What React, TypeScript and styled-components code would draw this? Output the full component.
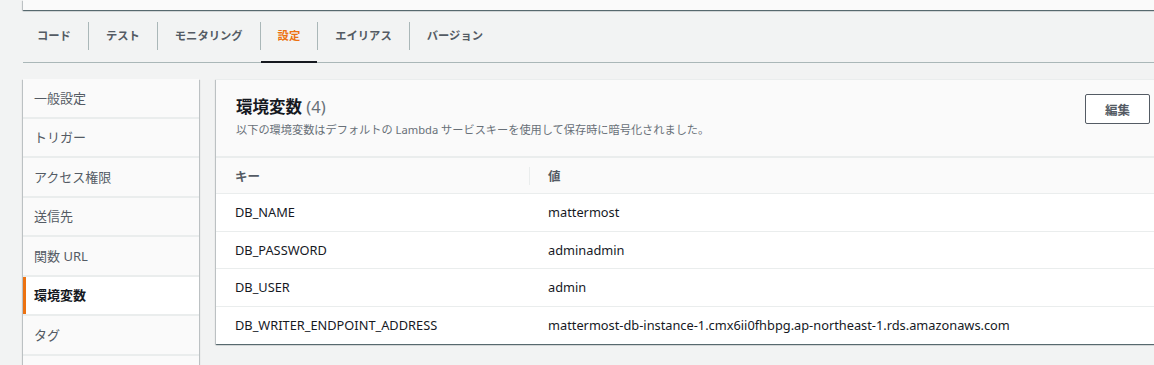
import React from "react";
import styled, { createGlobalStyle } from "styled-components";

const GlobalStyle = createGlobalStyle`
  html, body {
    margin: 0;
    padding: 0;
    background: #f2f3f3;
    overflow: hidden;
  }
  body {
    font-family: "Noto Sans", "Noto Sans CJK JP", sans-serif;
    color: #16191f;
  }
  * { box-sizing: border-box; }
`;

const cardShadow =
  "0 1px 1px 0 rgba(0,28,36,0.5), 1px 1px 1px 0 rgba(0,28,36,0.15), -1px 1px 1px 0 rgba(0,28,36,0.15)";

const Page = styled.div`
  width: calc(100% + 16px);
  padding-left: 23px;
  height: 365px;
  overflow: hidden;
`;

const TopCard = styled.div`
  height: 10px;
  background: #fafafa;
  box-shadow: ${cardShadow};
`;

const TabBar = styled.div`
  display: flex;
  margin-top: 9px;
  border-bottom: 1px solid #aab7b8;
`;

const Tab = styled.div`
  position: relative;
  padding: 3px 0 12px;
`;

const TabLabel = styled.div<{ $first?: boolean; $active?: boolean }>`
  height: 28px;
  line-height: 28px;
  padding: ${(p) => (p.$first ? "0 17px 0 14px" : "0 17px")};
  border-left: ${(p) => (p.$first ? "none" : "1px solid #aab7b8")};
  font-size: 11.3px;
  font-weight: 700;
  color: ${(p) => (p.$active ? "#ec7211" : "#545b64")};
  white-space: nowrap;
`;

const ActiveBar = styled.div`
  position: absolute;
  left: 1px;
  right: 0;
  bottom: -1px;
  height: 2px;
  background: #16191f;
`;

const Content = styled.div`
  display: flex;
  gap: 17px;
  margin-top: 16px;
  align-items: flex-start;
`;

const Nav = styled.nav`
  width: 176px;
  flex: none;
  display: flex;
  flex-direction: column;
  gap: 2px;
  background: #eaeded;
  box-shadow: ${cardShadow};
`;

const NavItem = styled.div<{ $active?: boolean }>`
  height: 37.5px;
  display: flex;
  align-items: center;
  padding-left: ${(p) => (p.$active ? "8px" : "11px")};
  padding-bottom: 1px;
  border-left: ${(p) => (p.$active ? "3px solid #ec7211" : "none")};
  background: ${(p) => (p.$active ? "#ffffff" : "#fafafa")};
  color: ${(p) => (p.$active ? "#16191f" : "#545b64")};
  font-weight: ${(p) => (p.$active ? 700 : 400)};
  font-size: 13px;
  white-space: nowrap;
`;

const Panel = styled.section`
  flex: 1;
  background: #fafafa;
  border-top: 1px solid #eaeded;
  box-shadow: ${cardShadow};
`;

const PanelHeader = styled.div`
  display: flex;
  justify-content: space-between;
  align-items: flex-start;
  padding: 16px 20px 18px 20px;
  border-bottom: 2px solid #eaeded;
`;

const TitleBlock = styled.div`
  display: flex;
  flex-direction: column;
`;

const Title = styled.h2`
  margin: 0;
  font-size: 16.5px;
  line-height: 22px;
  font-weight: 700;
  color: #16191f;
`;

const Count = styled.span`
  font-weight: 400;
  color: #687078;
`;

const Subtitle = styled.p`
  margin: 4px 0 0;
  font-size: 11.2px;
  line-height: 16px;
  color: #687078;
`;

const EditButton = styled.button`
  width: 65px;
  height: 30px;
  margin-top: -2px;
  background: #ffffff;
  border: 1px solid #545b64;
  border-radius: 2px;
  font-family: inherit;
  font-size: 12.5px;
  font-weight: 700;
  color: #545b64;
  padding: 0;
`;

const Table = styled.div`
  display: grid;
  grid-template-columns: 313px 1fr;
`;

const HeadCell = styled.div<{ $divided?: boolean }>`
  height: 36px;
  display: flex;
  align-items: center;
  padding-left: ${(p) => (p.$divided ? "0" : "19px")};
  background: #fafafa;
  border-bottom: 1px solid #eaeded;
  font-size: 12.5px;
  font-weight: 700;
  color: #545b64;
`;

const Divider = styled.span`
  width: 1px;
  height: 18px;
  background: #eaeded;
  margin-right: 18px;
`;

const Cell = styled.div<{ $last?: boolean }>`
  height: 37.5px;
  display: flex;
  align-items: center;
  padding-left: 19px;
  background: #ffffff;
  border-bottom: ${(p) => (p.$last ? "none" : "1px solid #eaeded")};
  font-size: 12.8px;
  color: #16191f;
  white-space: nowrap;
`;

const tabs = ["コード", "テスト", "モニタリング", "設定", "エイリアス", "バージョン"];
const navItems = [
  "一般設定",
  "トリガー",
  "アクセス権限",
  "送信先",
  "関数 URL",
  "環境変数",
  "タグ",
  "",
];
const rows: [string, string][] = [
  ["DB_NAME", "mattermost"],
  ["DB_PASSWORD", "adminadmin"],
  ["DB_USER", "admin"],
  [
    "DB_WRITER_ENDPOINT_ADDRESS",
    "mattermost-db-instance-1.cmx6ii0fhbpg.ap-northeast-1.rds.amazonaws.com",
  ],
];

export default function App() {
  return (
    <>
      <GlobalStyle />
      <Page>
        <TopCard />
        <TabBar>
          {tabs.map((t, i) => (
            <Tab key={t}>
              <TabLabel $first={i === 0} $active={t === "設定"}>
                {t}
              </TabLabel>
              {t === "設定" && <ActiveBar />}
            </Tab>
          ))}
        </TabBar>
        <Content>
          <Nav>
            {navItems.map((n, i) => (
              <NavItem key={i} $active={n === "環境変数"}>
                {n}
              </NavItem>
            ))}
          </Nav>
          <Panel>
            <PanelHeader>
              <TitleBlock>
                <Title>
                  環境変数 <Count>(4)</Count>
                </Title>
                <Subtitle>
                  以下の環境変数はデフォルトの Lambda
                  サービスキーを使用して保存時に暗号化されました。
                </Subtitle>
              </TitleBlock>
              <EditButton>編集</EditButton>
            </PanelHeader>
            <Table>
              <HeadCell>キー</HeadCell>
              <HeadCell $divided>
                <Divider />値
              </HeadCell>
              {rows.map(([k, v], i) => (
                <React.Fragment key={k}>
                  <Cell $last={i === rows.length - 1}>{k}</Cell>
                  <Cell $last={i === rows.length - 1}>{v}</Cell>
                </React.Fragment>
              ))}
            </Table>
          </Panel>
        </Content>
      </Page>
    </>
  );
}
